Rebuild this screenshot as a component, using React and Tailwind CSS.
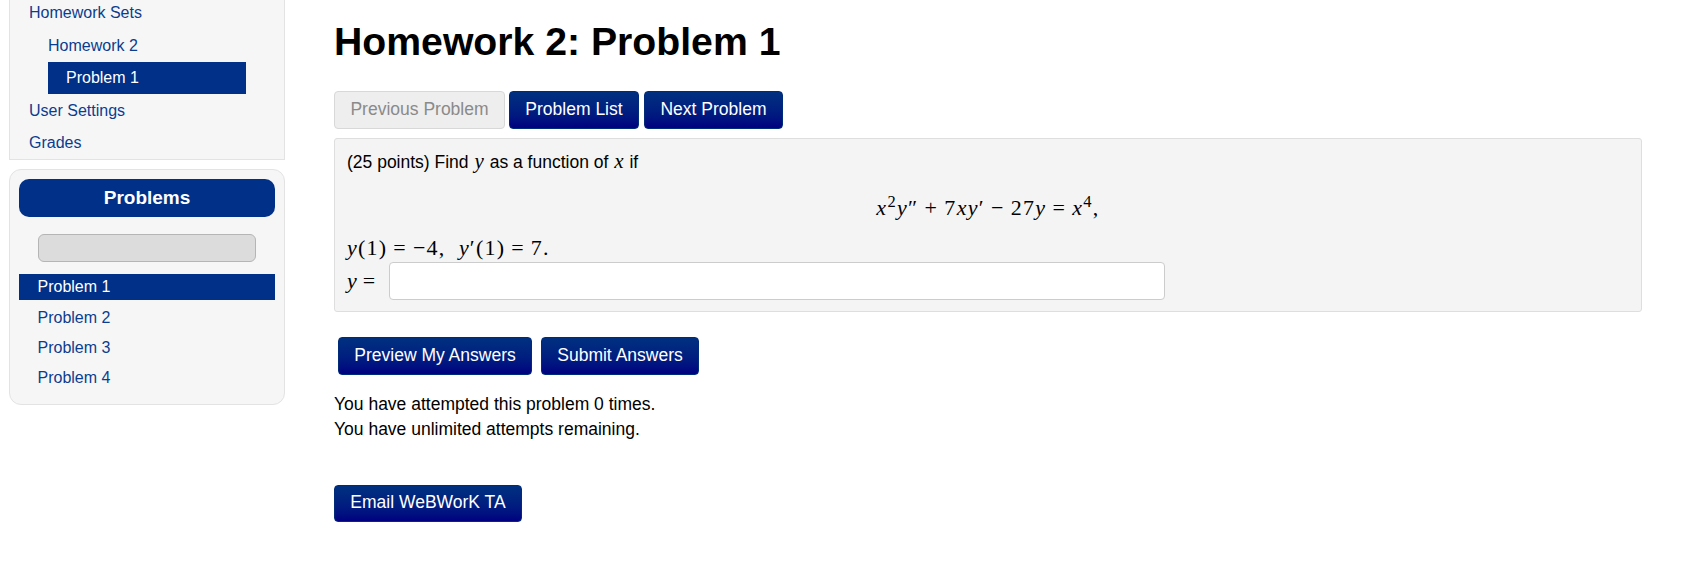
import React from 'react';

const NavyButton = ({ children, className = '' }) => (
  <button className={`pb-[2px] rounded-[4px] border border-[#002a7a] bg-linear-to-b from-[#00307f] to-[#000080] text-white text-[17.5px] whitespace-nowrap ${className}`}>
    {children}
  </button>
);

const Mi = ({ children }) => <i className="mx-[1px] font-['Liberation_Serif',serif] text-[21px] leading-none">{children}</i>;
const Op = ({ children }) => <span className="mx-[6px]">{children}</span>;

const SiteNav = () => (
  <ul className="border-x border-b border-[#e3e3e3] bg-[#f6f6f6] text-[#0b3d8f] pl-[19px] h-[163px] -mt-[3px] text-[16px]">
    <li className="h-[33px] leading-8">Homework Sets</li>
    <li className="h-8 leading-8 pl-[19px]">Homework 2</li>
    <li className="h-8 leading-8 ml-[19px] pl-[18px] w-[198px] bg-[#003087] text-white">Problem 1</li>
    <li className="h-[33px] leading-[34px]">User Settings</li>
    <li className="h-8 leading-8">Grades</li>
  </ul>
);

const ProblemList = () => (
  <div className="mt-[9px] h-[236px] rounded-[12px] border border-[#e3e3e3] bg-[#f6f6f6] px-[9px] pt-[9px]">
    <div className="h-[38px] rounded-[10px] bg-[#003087] text-white font-bold text-[19px] flex items-center justify-center">Problems</div>
    <div className="mt-[17px] mx-[19px] h-[28px] rounded-[6px] border border-[#b5b5b5] bg-[#dcdcdc]"></div>
    <ul className="mt-[12px] text-[16px] text-[#0b3d8f]">
      <li className="h-[26px] leading-[26px] pl-[18.5px] bg-[#003087] text-white">Problem 1</li>
      <li className="h-[30px] leading-[36px] pl-[18.5px]">Problem 2</li>
      <li className="h-[30px] leading-[36px] pl-[18.5px]">Problem 3</li>
      <li className="h-[30px] leading-[36px] pl-[18.5px]">Problem 4</li>
    </ul>
  </div>
);

export default function App() {
  return (
    <div className="h-[587px] w-[1707px] overflow-hidden bg-white flex font-['Liberation_Sans',Arial,sans-serif] text-black">
      <aside className="w-[276px] ml-[9px] shrink-0">
        <SiteNav />
        <ProblemList />
      </aside>
      <main className="ml-[49px] w-[1308px]">
        <h1 className="mt-[17px] h-[50px] text-[39.2px] leading-[50px] font-bold">Homework 2: Problem 1</h1>
        <div className="mt-[24px] flex">
          <button className="h-[38px] w-[171px] pb-[2px] rounded-[4px] border border-[#d8d8d8] bg-[#eeeeee] text-[#8a8a8a] text-[17.5px]">Previous Problem</button>
          <NavyButton className="h-[38px] ml-[4px] w-[130px]">Problem List</NavyButton>
          <NavyButton className="h-[38px] ml-[5px] w-[139px]">Next Problem</NavyButton>
        </div>
        <section className="mt-[9px] h-[174px] rounded-[3px] border border-[#dedede] bg-[#f4f4f4] px-[12px] text-[17.5px]">
          <p className="mt-[10px] h-[26px] leading-[26px]">(25 points) Find <Mi>y</Mi> as a function of <Mi>x</Mi> if</p>
          <div className="mt-[20px] h-[26px] leading-[26px] text-center font-['Liberation_Serif',serif] text-[22px] tracking-[0.06em]">
            <i>x</i><sup>2</sup><i>y</i>″<Op>+</Op>7<i>xy</i>′<Op>−</Op>27<i>y</i><Op>=</Op><i>x</i><sup>4</sup>,
          </div>
          <p className="mt-[15px] h-[24px] leading-[24px] font-['Liberation_Serif',serif] text-[22px] tracking-[0.055em]">
            <i>y</i>(1)<Op>=</Op>−4,&nbsp;&nbsp;<i>y</i>′(1)<Op>=</Op>7.
          </p>
          <div className="flex items-center h-[38px] mt-[2px] font-['Liberation_Serif',serif] text-[22px]">
            <span className="w-[42px] pb-[2px] whitespace-nowrap"><i>y</i><Op>=</Op></span>
            <input className="w-[776px] h-[38px] rounded-[4px] border border-[#cccccc] bg-white" />
          </div>
        </section>
        <div className="mt-[25px] ml-[4px] flex gap-[9px]">
          <NavyButton className="h-[38px] w-[194px]">Preview My Answers</NavyButton>
          <NavyButton className="h-[38px] w-[158px]">Submit Answers</NavyButton>
        </div>
        <p className="mt-[17px] text-[17.5px] leading-[25px]">You have attempted this problem 0 times.<br />You have unlimited attempts remaining.</p>
        <NavyButton className="h-[37px] mt-[43px] w-[188px]">Email WeBWorK TA</NavyButton>
      </main>
    </div>
  );
}
